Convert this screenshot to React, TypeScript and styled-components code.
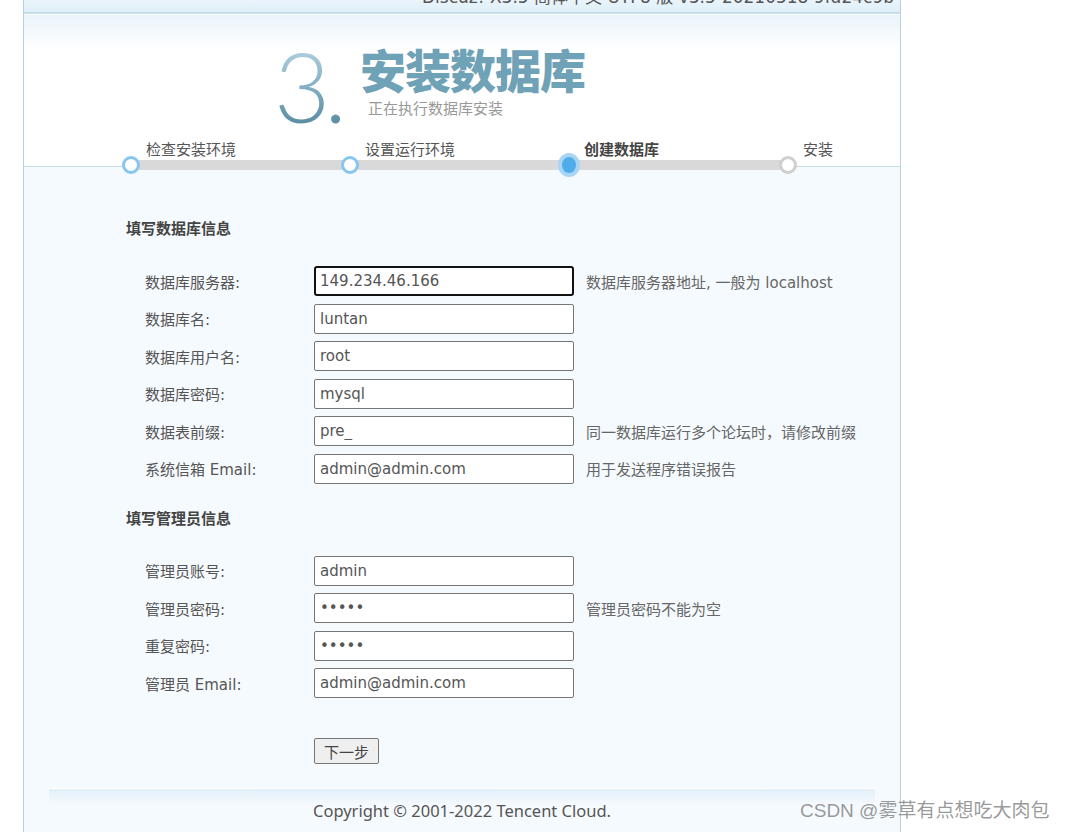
import React from "react";
import styled, { createGlobalStyle } from "styled-components";

const GlobalStyle = createGlobalStyle`
  html, body {
    margin: 0;
    padding: 0;
    background: #ffffff;
  }
  body {
    font-family: "Noto Sans", "Noto Sans CJK SC", sans-serif;
    font-size: 15px;
    color: #555;
  }
`;

const CJK = `"Noto Sans CJK SC", "Noto Sans", sans-serif`;
const MIXED = `"DejaVu Sans", "Noto Sans CJK SC", sans-serif`;

interface FieldType {
  label: string;
  value: string;
  type?: string;
  help?: string;
  focused?: boolean;
}

const dbFields: FieldType[] = [
  { label: "数据库服务器:", value: "149.234.46.166", help: "数据库服务器地址, 一般为 localhost", focused: true },
  { label: "数据库名:", value: "luntan" },
  { label: "数据库用户名:", value: "root" },
  { label: "数据库密码:", value: "mysql" },
  { label: "数据表前缀:", value: "pre_", help: "同一数据库运行多个论坛时，请修改前缀" },
  { label: "系统信箱 Email:", value: "admin@admin.com", help: "用于发送程序错误报告" },
];

const adminFields: FieldType[] = [
  { label: "管理员账号:", value: "admin" },
  { label: "管理员密码:", value: "admin", type: "password", help: "管理员密码不能为空" },
  { label: "重复密码:", value: "admin", type: "password" },
  { label: "管理员 Email:", value: "admin@admin.com" },
];

type StepState = "done" | "current" | "todo";

const steps: { name: string; state: StepState }[] = [
  { name: "检查安装环境", state: "done" },
  { name: "设置运行环境", state: "done" },
  { name: "创建数据库", state: "current" },
  { name: "安装", state: "todo" },
];

const Page = styled.div`
  width: 876px;
  margin-left: 23px;
  border-left: 1px solid #b9d0dc;
  border-right: 1px solid #b9d0dc;
  min-height: 832px;
  background: #f5fafe;
  overflow: hidden;
`;

const TopBar = styled.div`
  height: 12px;
  background: linear-gradient(#e9f4fb, #dfeff9);
  border-bottom: 2px solid #c8dde8;
  overflow: hidden;
  text-align: right;
  padding-right: 6px;
  & > span {
    display: block;
    margin-top: -12px;
    line-height: 18px;
    font-family: ${MIXED};
    font-size: 17px;
    color: #555;
    white-space: nowrap;
  }
`;

const Header = styled.div`
  border-top: 1px solid #ffffff;
  background: linear-gradient(#eaf4fa 0, #ffffff 36px);
  border-bottom: 1px solid #c6dce7;
  padding-top: 34px;
`;

const TitleRow = styled.div`
  display: flex;
  align-items: flex-start;
  padding-left: 250px;
  height: 92px;
`;

const StepNumber = styled.div`
  font-family: "Lato", "DejaVu Sans", sans-serif;
  font-weight: 300;
  font-size: 97px;
  line-height: 76px;
  letter-spacing: -6px;
  background: linear-gradient(#b0d0df, #5b8ea4);
  -webkit-background-clip: text;
  background-clip: text;
  color: transparent;
  margin-top: -1px;
`;

const TitleText = styled.div`
  margin-left: 19px;
  display: flex;
  flex-direction: column;
`;

const MainTitle = styled.h1`
  margin: -4px 0 0 0;
  font-family: ${CJK};
  font-weight: 900;
  font-size: 46px;
  line-height: 46px;
  color: #6fa2b6;
  letter-spacing: -1px;
`;

const SubTitle = styled.div`
  margin-top: 9px;
  font-family: ${CJK};
  font-size: 15px;
  line-height: 16px;
  color: #999;
  padding-left: 8px;
`;

const StepTrack = styled.div`
  display: flex;
  margin-left: 96px;
  margin-bottom: -10px;
  position: relative;
`;

const Step = styled.div<{ last?: boolean }>`
  position: relative;
  width: ${p => (p.last ? "80px" : "219px")};
  &::before {
    content: "";
    display: ${p => (p.last ? "none" : "block")};
    position: absolute;
    left: 11px;
    width: 100%;
    top: 19px;
    height: 10px;
    background: #d9d9d9;
  }
`;

const StepLabel = styled.div<{ active: boolean }>`
  padding-left: 26px;
  font-family: ${CJK};
  font-size: 15px;
  line-height: 16px;
  color: ${p => (p.active ? "#444" : "#555")};
  font-weight: ${p => (p.active ? 700 : 400)};
  white-space: nowrap;
`;

const DotArea = styled.div`
  position: relative;
  z-index: 1;
  width: 22px;
  height: 22px;
  margin-top: -3px;
  display: flex;
  align-items: center;
  justify-content: center;
`;

const Dot = styled.span<{ state: StepState }>`
  box-sizing: border-box;
  display: block;
  border-radius: 50%;
  width: ${p => (p.state === "current" ? "24px" : "18px")};
  height: ${p => (p.state === "current" ? "24px" : "18px")};
  background: ${p => (p.state === "current" ? "#4fabe9" : "#ffffff")};
  border: ${p =>
    p.state === "current"
      ? "4px solid #a7d6f5"
      : p.state === "done"
      ? "3px solid #86c6f0"
      : "3px solid #cfcfcf"};
`;

const Body = styled.div`
  padding: 0 25px 0 25px;
`;

const Form = styled.div`
  padding-left: 77px;
`;

const SectionTitle = styled.h3<{ top: number }>`
  margin: ${p => p.top}px 0 0 0;
  font-family: ${CJK};
  font-size: 15px;
  line-height: 20px;
  font-weight: 700;
  color: #444;
`;

const Fields = styled.div`
  margin-top: 28px;
  padding-left: 19px;
  display: flex;
  flex-direction: column;
  gap: 7.5px;
`;

const Row = styled.div`
  display: flex;
  align-items: center;
  height: 30px;
`;

const Label = styled.label`
  width: 169px;
  font-family: ${MIXED};
  font-size: 15px;
  color: #555;
`;

const Input = styled.input<{ focused?: boolean }>`
  box-sizing: border-box;
  width: 260px;
  height: 30px;
  padding: 0 5px;
  background: #ffffff;
  border: ${p => (p.focused ? "2px solid #111" : "1px solid #767676")};
  border-radius: ${p => (p.focused ? "3px" : "2px")};
  padding-left: ${p => (p.focused ? "4px" : "5px")};
  font-family: "DejaVu Sans", sans-serif;
  font-size: 15px;
  color: #555;
  outline: none;
`;

const Help = styled.span`
  margin-left: 12px;
  font-family: ${MIXED};
  font-size: 15px;
  color: #666;
  white-space: nowrap;
`;

const ButtonRow = styled.div`
  margin-top: 40px;
  padding-left: 188px;
`;

const NextButton = styled.button`
  box-sizing: border-box;
  width: 65px;
  height: 26px;
  padding: 0;
  background: #efefef;
  border: 1px solid #767676;
  border-radius: 2px;
  font-family: ${CJK};
  font-size: 15px;
  color: #444;
`;

const Footer = styled.div`
  margin-top: 24px;
  border-top: 1px solid #ffffff;
  background: linear-gradient(#e2eff8, #f5fafe 16px);
  padding-top: 12px;
  height: 40px;
  text-align: center;
  font-family: "Noto Sans", sans-serif;
  font-size: 16.5px;
  line-height: 20px;
  color: #555;
`;

const Watermark = styled.div`
  position: absolute;
  left: 800px;
  top: 798px;
  font-family: "Liberation Sans", ${CJK};
  font-size: 19px;
  line-height: 26px;
  color: rgba(120, 120, 120, 0.75);
  white-space: nowrap;
`;

const FieldRows: React.FC<{ list: FieldType[] }> = ({ list }) => (
  <Fields>
    {list.map((f, idx) => (
      <Row key={idx}>
        <Label>{f.label}</Label>
        <Input type={f.type || "text"} defaultValue={f.value} focused={f.focused} readOnly />
        {f.help && <Help>{f.help}</Help>}
      </Row>
    ))}
  </Fields>
);

export default function App() {
  return (
    <>
      <GlobalStyle />
      <Page>
        <TopBar>
          <span>Discuz! X3.5 简体中文 UTF8 版 v3.5-20210518 9fd24c9b</span>
        </TopBar>
        <Header>
          <TitleRow>
            <StepNumber>3.</StepNumber>
            <TitleText>
              <MainTitle>安装数据库</MainTitle>
              <SubTitle>正在执行数据库安装</SubTitle>
            </TitleText>
          </TitleRow>
          <StepTrack>
            {steps.map((s, idx) => (
              <Step key={s.name} last={idx === steps.length - 1}>
                <StepLabel active={s.state === "current"}>{s.name}</StepLabel>
                <DotArea>
                  <Dot state={s.state} />
                </DotArea>
              </Step>
            ))}
          </StepTrack>
        </Header>
        <Body>
          <Form>
            <SectionTitle top={51}>填写数据库信息</SectionTitle>
            <FieldRows list={dbFields} />
            <SectionTitle top={24}>填写管理员信息</SectionTitle>
            <FieldRows list={adminFields} />
            <ButtonRow>
              <NextButton>下一步</NextButton>
            </ButtonRow>
          </Form>
          <Footer>Copyright © 2001-2022 Tencent Cloud.</Footer>
        </Body>
      </Page>
      <Watermark>CSDN @雾草有点想吃大肉包</Watermark>
    </>
  );
}
